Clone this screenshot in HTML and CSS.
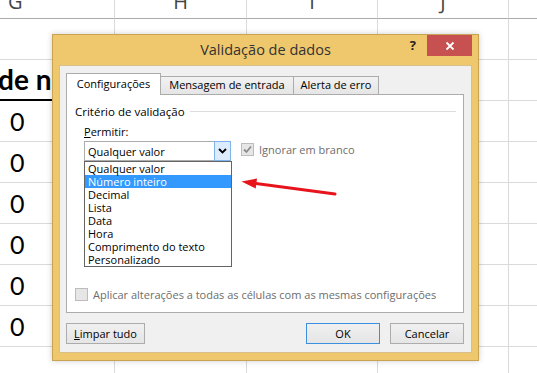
FILE: index.html
```html
<!DOCTYPE html>
<html lang="pt">
<head>
    <meta charset="UTF-8">
    <title>Validação de dados</title>
    <link rel="stylesheet" href="styles.css">
</head>
<body>
    <!-- planilha ao fundo -->
    <div class="sheet">
        <div class="col-head col-g">G</div>
        <div class="col-head">H</div>
        <div class="col-head">I</div>
        <div class="col-head">J</div>
        <div class="col-head"></div>
        <div class="col-head"></div>

        <div></div><div></div><div></div><div></div><div></div><div></div>

        <div class="title-cell">de notas</div><div></div><div></div><div></div><div></div><div></div>

        <div class="num">0</div><div></div><div></div><div></div><div></div><div></div>
        <div class="num">0</div><div></div><div></div><div></div><div></div><div></div>
        <div class="num">0</div><div></div><div></div><div></div><div></div><div></div>
        <div class="num">0</div><div></div><div></div><div></div><div></div><div></div>
        <div class="num">0</div><div></div><div></div><div></div><div></div><div></div>
        <div class="num">0</div><div></div><div></div><div></div><div></div><div></div>

        <div></div><div></div><div></div><div></div><div></div><div></div>
    </div>

    <!-- janela de validação -->
    <div class="dialog">
        <div class="titlebar">
            <div class="title">Validação de dados</div>
            <div class="title-buttons">
                <span class="help">?</span>
                <span class="close">
                    <svg width="10" height="10" viewBox="0 0 10 10">
                        <path d="M1.5 1.5 L8.5 8.5 M8.5 1.5 L1.5 8.5" stroke="#fff" stroke-width="1.8"/>
                    </svg>
                </span>
            </div>
        </div>

        <div class="client">
            <div class="tabs">
                <div class="tab active">Configurações</div>
                <div class="tab tab-msg">Mensagem de entrada</div>
                <div class="tab tab-err">Alerta de erro</div>
            </div>

            <div class="panel">
                <div class="group-label">
                    <span>Critério de validação</span>
                    <span class="group-line"></span>
                </div>

                <div class="field-label"><u>P</u>ermitir:</div>

                <div class="field-row">
                    <div class="combo">
                        <span class="combo-text">Qualquer valor</span>
                        <span class="combo-btn">
                            <svg width="9" height="6" viewBox="0 0 9 6">
                                <path d="M1 1 L4.5 4.5 L8 1" fill="none" stroke="#000" stroke-width="1.8"/>
                            </svg>
                        </span>
                        <ul class="droplist">
                            <li>Qualquer valor</li>
                            <li class="selected">Número inteiro</li>
                            <li>Decimal</li>
                            <li>Lista</li>
                            <li>Data</li>
                            <li>Hora</li>
                            <li>Comprimento do texto</li>
                            <li>Personalizado</li>
                        </ul>
                    </div>

                    <label class="check disabled">
                        <span class="box">
                            <svg width="11" height="11" viewBox="0 0 11 11">
                                <path d="M2 5.5 L4.5 8 L9 2.5" fill="none" stroke="#8c8c8c" stroke-width="1.8"/>
                            </svg>
                        </span>
                        Ignorar em branco
                    </label>
                </div>

                <label class="check disabled apply">
                    <span class="box"></span>
                    Aplicar alterações a todas as células com as mesmas configurações
                </label>
            </div>

            <div class="buttons">
                <button class="btn btn-clear"><u>L</u>impar tudo</button>
                <span class="spacer"></span>
                <button class="btn btn-ok">OK</button>
                <button class="btn">Cancelar</button>
            </div>
        </div>
    </div>

    <!-- seta vermelha -->
    <svg class="arrow" width="102" height="26" viewBox="238 172 102 26">
        <line x1="335" y1="194" x2="254" y2="183.2" stroke="#e8141c" stroke-width="3" stroke-linecap="round"/>
        <polygon points="241.5,181.5 257,178.5 255.7,188.5" fill="#e8141c"/>
    </svg>
</body>
</html>
```

FILE: styles.css
```css
body {
    margin: 0;
    width: 537px;
    height: 373px;
    overflow: hidden;
    position: relative;
    background: #fff;
    font-family: "Open Sans", sans-serif;
}

/* Planilha */
.sheet {
    display: grid;
    grid-template-columns: 115px 132px 131px 131px 131px 1fr;
    grid-template-rows: 19px;
    grid-auto-rows: 41px;
    font-family: Lato, sans-serif;
    color: #000;
}

.sheet > div {
    box-sizing: border-box;
    border-right: 1px solid #dadada;
    border-bottom: 1px solid #dadada;
    overflow: hidden;
    white-space: nowrap;
}

.sheet > .col-head {
    border-bottom-color: #ababab;
    font-family: "Open Sans", sans-serif;
    font-size: 20px;
    line-height: 0;
    padding-top: 2px;
    text-align: center;
    color: #444;
}

.sheet > .col-g {
    text-align: left;
    padding-left: 8px;
}

.sheet > .title-cell {
    border-bottom: 2px solid #000;
    font-size: 28px;
    font-weight: bold;
    line-height: 39px;
    padding-left: 0;
    text-indent: -2px;
}

.sheet > .num {
    font-size: 25px;
    line-height: 40px;
    padding-top: 0;
    padding-left: 10px;
}

/* Janela */
.dialog {
    position: absolute;
    left: 52px;
    top: 34px;
    width: 427px;
    height: 327px;
    box-sizing: border-box;
    border: 1px solid #c8a352;
    background: #efc76c;
    box-shadow: 0 0 6px rgba(0, 0, 0, 0.2);
    padding: 0 6px 7px;
    display: flex;
    flex-direction: column;
    font-size: 11px;
    color: #000;
}

.titlebar {
    height: 30px;
    display: grid;
    grid-template-columns: 1fr auto 1fr;
}

.title {
    grid-column: 2;
    font-size: 14.5px;
    color: #333;
    padding-top: 5px;
}

.title-buttons {
    display: flex;
    justify-content: flex-end;
    align-items: flex-start;
}

.help {
    font-weight: bold;
    font-size: 13px;
    color: #222;
    margin-top: 1px;
    margin-right: 11px;
}

.close {
    width: 45px;
    height: 21px;
    background: #c75050;
    display: flex;
    align-items: center;
    justify-content: center;
}

.client {
    flex: 1;
    background: #f0f0f0;
    border: 1px solid #d8c08a;
    padding: 7px 7px 0 6px;
    display: flex;
    flex-direction: column;
}

/* Abas */
.tabs {
    display: flex;
    align-items: flex-end;
    height: 21px;
    position: relative;
    z-index: 1;
}

.tab {
    box-sizing: border-box;
    height: 18px;
    border: 1px solid #acacac;
    border-bottom: none;
    background: linear-gradient(#f2f2f2, #e5e5e5);
    text-align: center;
    line-height: 16px;
    margin-left: -1px;
}

.tab.active {
    width: 95px;
    height: 22px;
    margin-left: 0;
    margin-bottom: -1px;
    background: #fff;
    line-height: 20px;
}

.tab-msg {
    width: 134px;
}

.tab-err {
    width: 86px;
}

.panel {
    height: 219px;
    box-sizing: border-box;
    background: #fff;
    border: 1px solid #acacac;
    padding: 9px 7px 10px 8px;
    display: flex;
    flex-direction: column;
}

.group-label {
    display: flex;
    align-items: center;
    gap: 5px;
    height: 14px;
    font-size: 11.5px;
}

.group-line {
    flex: 1;
    height: 1px;
    background: #dcdcdc;
}

.field-label {
    margin: 7px 0 0 9px;
    height: 13px;
    line-height: 13px;
}

.field-row {
    display: flex;
    align-items: flex-start;
    margin: 3px 0 0 9px;
}

.combo {
    position: relative;
    width: 147px;
    height: 20px;
    box-sizing: border-box;
    border: 1px solid #acacac;
    display: flex;
    align-items: center;
}

.combo-text {
    flex: 1;
    padding-left: 3px;
}

.combo-btn {
    width: 17px;
    height: 20px;
    margin: -1px -1px -1px 0;
    box-sizing: border-box;
    border: 1px solid #7eb4ea;
    background: #dcecfc;
    display: flex;
    align-items: center;
    justify-content: center;
}

.droplist {
    position: absolute;
    left: -1px;
    top: 19px;
    width: 148px;
    box-sizing: border-box;
    margin: 0;
    padding: 0;
    list-style: none;
    background: #fff;
    border: 1px solid #646464;
    z-index: 2;
}

.droplist li {
    height: 13px;
    line-height: 13px;
    padding-left: 3px;
}

.droplist li.selected {
    background: #3399ff;
    color: #fff;
}

.check {
    display: flex;
    align-items: center;
    gap: 5px;
}

.check.disabled {
    color: #6d6d6d;
}

.field-row .check {
    margin: 1px 0 0 10px;
}

.box {
    width: 13px;
    height: 13px;
    box-sizing: border-box;
    border: 1px solid #bcbcbc;
    background: #e6e6e6;
    display: flex;
    align-items: center;
    justify-content: center;
}

.apply {
    margin-top: auto;
}

/* Botões */
.buttons {
    display: flex;
    gap: 10px;
    margin-top: 10px;
}

.spacer {
    flex: 1;
}

.btn {
    height: 21px;
    box-sizing: border-box;
    border: 1px solid #acacac;
    background: linear-gradient(#f0f0f0, #e5e5e5);
    font-family: "Open Sans", sans-serif;
    font-size: 11px;
    color: #000;
    padding: 0;
    width: 74px;
}

.btn-clear {
    width: 79px;
}

.btn-ok {
    border-color: #3c8ee0;
}

/* Seta */
.arrow {
    position: absolute;
    left: 238px;
    top: 172px;
}
```
